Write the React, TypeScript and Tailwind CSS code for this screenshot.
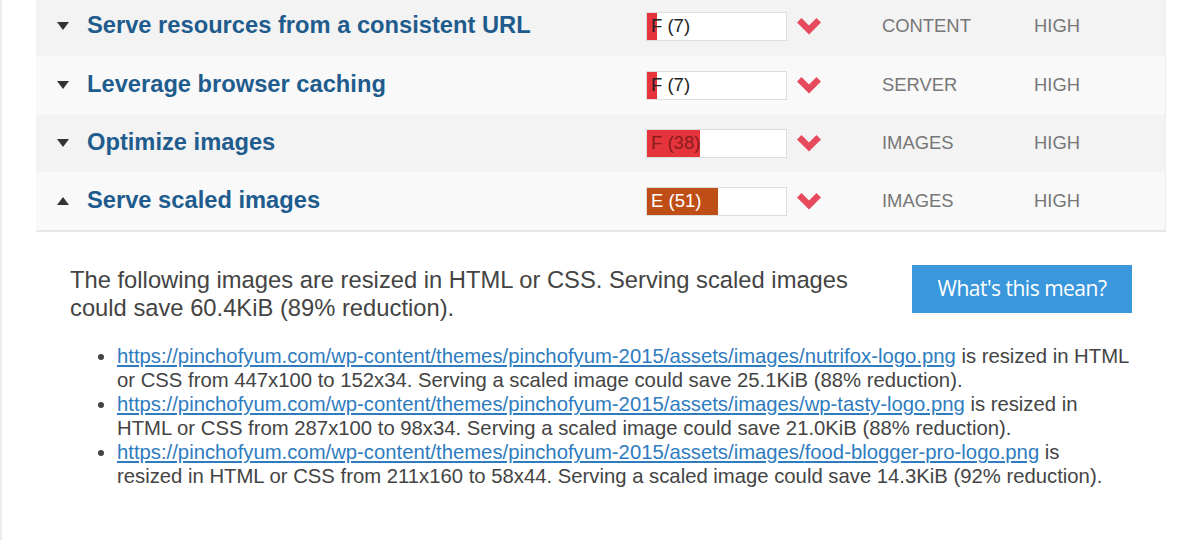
import React from "react";

type Row = {
  title: string;
  grade: string;
  pct: number;
  fill: string;
  textColor: string;
  category: string;
  priority: string;
  open: boolean;
  bg: string;
  h: string;
};

const rows: Row[] = [
  { title: "Serve resources from a consistent URL", grade: "F (7)", pct: 7, fill: "#e5343c", textColor: "#222222", category: "CONTENT", priority: "HIGH", open: false, bg: "bg-[#f3f3f3]", h: "h-[56px] pb-[4px]" },
  { title: "Leverage browser caching", grade: "F (7)", pct: 7, fill: "#e5343c", textColor: "#222222", category: "SERVER", priority: "HIGH", open: false, bg: "bg-[#f9f9f9]", h: "h-[58px]" },
  { title: "Optimize images", grade: "F (38)", pct: 38, fill: "#e5343c", textColor: "#8a1c1c", category: "IMAGES", priority: "HIGH", open: false, bg: "bg-[#f3f3f3]", h: "h-[58px]" },
  { title: "Serve scaled images", grade: "E (51)", pct: 51, fill: "#bf4e16", textColor: "#ffffff", category: "IMAGES", priority: "HIGH", open: true, bg: "bg-[#f9f9f9]", h: "h-[58px]" },
];

function Triangle({ up }: { up: boolean }) {
  return (
    <svg width="12" height="8" viewBox="0 0 12 8" className="block">
      {up ? <polygon points="0,8 12,8 6,0" fill="#333333" /> : <polygon points="0,0 12,0 6,8" fill="#333333" />}
    </svg>
  );
}

function Chevron() {
  return (
    <svg width="24" height="17" viewBox="0 0 24 17" className="block">
      <polygon points="0,4.5 4.5,0 12,7.5 19.5,0 24,4.5 12,16.5" fill="#e64a5c" />
    </svg>
  );
}

const base = "https://pinchofyum.com/wp-content/themes/pinchofyum-2015/assets/images/";

export default function App() {
  return (
    <div className="w-[1200px] h-[540px] bg-white border-l-2 border-[#ececec] overflow-hidden" style={{ fontFamily: '"Liberation Sans", Arial, sans-serif' }}>
      <div className="ml-[34px] w-[1130px]">
        <div className="border-b-2 border-[#e6e6e6]">
          {rows.map((r, i) => (
            <div key={i} className={`flex items-center ${r.bg} ${r.h} border-r border-[#ececec]`}>
              <div className="w-[51px] pl-[21px] flex items-center">
                <Triangle up={r.open} />
              </div>
              <div className="w-[559px] text-[23.7px] font-bold text-[#1f5c8e] leading-none">{r.title}</div>
              <div className="relative w-[141px] h-[29px] bg-white border border-[#dddddd] overflow-hidden">
                <div className="absolute left-0 top-0 bottom-0" style={{ width: `${r.pct}%`, backgroundColor: r.fill }} />
                <div className="relative pl-[4px] h-full flex items-center text-[18.5px]" style={{ color: r.textColor }}>
                  {r.grade}
                </div>
              </div>
              <div className="ml-[10px] w-[24px]">
                <Chevron />
              </div>
              <div className="ml-[61px] w-[152px] text-[18.4px] text-[#777777]">{r.category}</div>
              <div className="text-[18.4px] text-[#777777]">{r.priority}</div>
            </div>
          ))}
        </div>
        <div className="px-[34px] pt-[33px]">
          <div className="flex justify-between items-start">
            <p className="text-[23.75px] leading-[28px] text-[#444444] pt-[1px] whitespace-nowrap">
              The following images are resized in HTML or CSS. Serving scaled images
              <br />
              could save 60.4KiB (89% reduction).
            </p>
            <button
              className="w-[220px] h-[48px] bg-[#3a97dc] text-white text-[21px] tracking-[-0.5px] flex items-center justify-center"
              style={{ fontFamily: '"Open Sans", sans-serif' }}
            >
              What's this mean?
            </button>
          </div>
          <ul className="list-disc pl-[47px] mt-[22px] text-[20.3px] leading-[24px] text-[#444444] whitespace-nowrap">
            <li>
              <a className="text-[#2e7cc0] underline">{base}nutrifox-logo.png</a> is resized in HTML
              <br />
              or CSS from 447x100 to 152x34. Serving a scaled image could save 25.1KiB (88% reduction).
            </li>
            <li>
              <a className="text-[#2e7cc0] underline">{base}wp-tasty-logo.png</a> is resized in
              <br />
              HTML or CSS from 287x100 to 98x34. Serving a scaled image could save 21.0KiB (88% reduction).
            </li>
            <li>
              <a className="text-[#2e7cc0] underline">{base}food-blogger-pro-logo.png</a> is
              <br />
              resized in HTML or CSS from 211x160 to 58x44. Serving a scaled image could save 14.3KiB (92% reduction).
            </li>
          </ul>
        </div>
      </div>
    </div>
  );
}
